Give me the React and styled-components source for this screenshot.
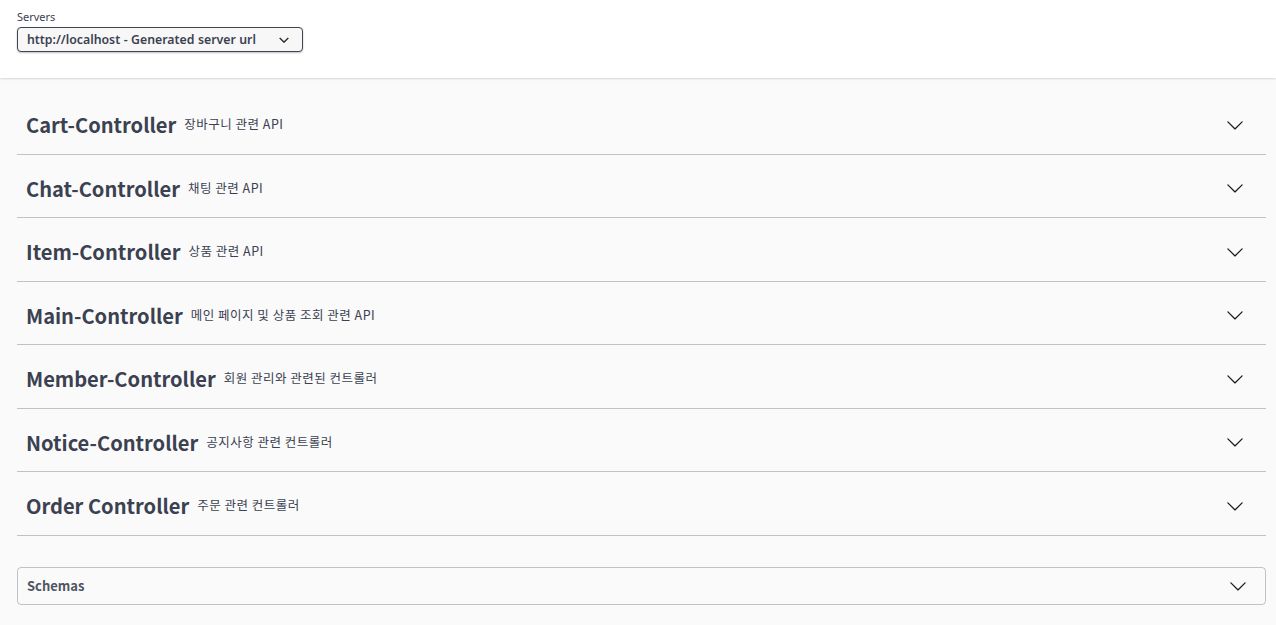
import React from 'react';
import styled, { createGlobalStyle } from 'styled-components';

const GlobalStyle = createGlobalStyle`
    html, body {
        margin: 0;
        padding: 0;
        background: #fafafa;
    }
    body {
        font-family: "Noto Sans", "Noto Sans CJK KR", sans-serif;
        color: #3b4151;
    }
`;

const SchemeContainer = styled.section`
    background: #fff;
    box-shadow: 0 1px 2px 0 rgba(0, 0, 0, 0.15);
    padding: 10px 17px 26px;
`;

const Label = styled.div`
    font-size: 11px;
    line-height: 14px;
    color: #3b4151;
    margin-bottom: 3px;
`;

const Select = styled.div`
    width: 286px;
    height: 25px;
    box-sizing: border-box;
    display: flex;
    align-items: center;
    justify-content: space-between;
    padding: 0 13px 0 9px;
    border: 1px solid #41444e;
    border-radius: 4px;
    background: #f7f7f7;
    box-shadow: 0 1px 2px 0 rgba(0, 0, 0, 0.25);
    font-size: 12.3px;
    font-weight: 600;
    word-spacing: 0.3px;
    color: #3b4151;
`;

const Wrapper = styled.main`
    padding: 13px 10px 20px 17px;
`;

const TagRow = styled.div`
    height: 63.5px;
    box-sizing: border-box;
    display: flex;
    align-items: center;
    padding: 5px 22px 0 9px;
    border-bottom: 1px solid rgba(59, 65, 81, 0.3);
    cursor: pointer;
`;

const TagTitle = styled.h3`
    margin: 0;
    flex: 1;
    display: flex;
    align-items: center;
    font-size: 20.1px;
    font-weight: 700;
    color: #3b4151;
`;

const TagName = styled.span`
    font-family: "Noto Sans CJK KR", sans-serif;
`;

const TagDesc = styled.small`
    margin-left: 8px;
    font-size: 12.5px;
    font-weight: 400;
    letter-spacing: 0.5px;
    color: #3b4151;
    font-family: "Noto Sans CJK KR", sans-serif;
    position: relative;
    top: -1px;
`;

const Schemas = styled.section`
    margin-top: 31px;
    height: 38px;
    box-sizing: border-box;
    border: 1px solid rgba(59, 65, 81, 0.3);
    border-radius: 4px;
    display: flex;
    align-items: center;
    justify-content: space-between;
    padding: 0 18px 0 9px;
`;

const SchemasTitle = styled.h4`
    margin: 0;
    font-size: 13px;
    font-weight: 700;
    color: #505562;
    font-family: "Noto Sans CJK KR", sans-serif;
`;

const Arrow = ({ size = 18 }) => (
    <svg width={size} height={size} viewBox="0 0 20 20" aria-hidden="true">
        <path
            fill="#1b1b1b"
            d="M17.418 6.109c.272-.268.709-.268.979 0s.271.701 0 .969l-7.908 7.83c-.27.268-.707.268-.979 0l-7.908-7.830c-.27-.268-.27-.701 0-.969.271-.268.709-.268.979 0L10 13.25l7.418-7.141z"
        />
    </svg>
);

const SmallArrow = () => (
    <svg width="10" height="10" viewBox="0 0 20 20" aria-hidden="true">
        <path
            fill="#1b1b1b"
            stroke="#1b1b1b"
            strokeWidth="1.5"
            d="M17.418 6.109c.272-.268.709-.268.979 0s.271.701 0 .969l-7.908 7.83c-.27.268-.707.268-.979 0l-7.908-7.83c-.27-.268-.27-.701 0-.969.271-.268.709-.268.979 0L10 13.25l7.418-7.141z"
        />
    </svg>
);

const tags = [
    { name: 'Cart-Controller', desc: '장바구니 관련 API' },
    { name: 'Chat-Controller', desc: '채팅 관련 API' },
    { name: 'Item-Controller', desc: '상품 관련 API' },
    { name: 'Main-Controller', desc: '메인 페이지 및 상품 조회 관련 API' },
    { name: 'Member-Controller', desc: '회원 관리와 관련된 컨트롤러' },
    { name: 'Notice-Controller', desc: '공지사항 관련 컨트롤러' },
    { name: 'Order Controller', desc: '주문 관련 컨트롤러' },
];

const App = () => {
    return (
        <>
            <GlobalStyle />
            <SchemeContainer>
                <Label>Servers</Label>
                <Select>
                    <span>http://localhost - Generated server url</span>
                    <SmallArrow />
                </Select>
            </SchemeContainer>
            <Wrapper>
                {tags.map((tag) => (
                    <TagRow key={tag.name}>
                        <TagTitle>
                            <TagName>{tag.name}</TagName>
                            <TagDesc>{tag.desc}</TagDesc>
                        </TagTitle>
                        <Arrow />
                    </TagRow>
                ))}
                <Schemas>
                    <SchemasTitle>Schemas</SchemasTitle>
                    <Arrow />
                </Schemas>
            </Wrapper>
        </>
    );
};

export default App;
